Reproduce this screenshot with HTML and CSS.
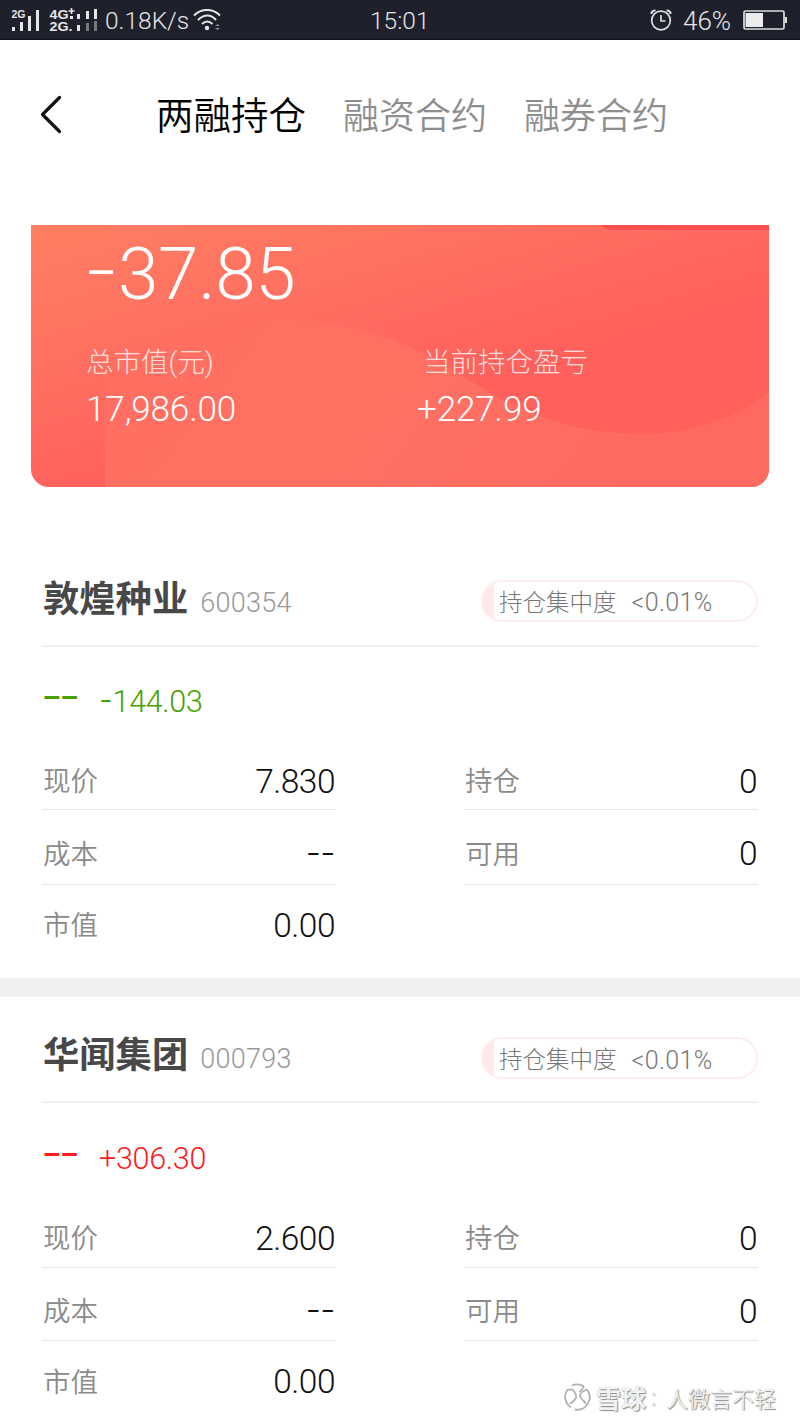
FILE: index.html
```html
<!DOCTYPE html>
<html lang="zh-CN">
<head>
    <meta charset="UTF-8">
    <meta name="viewport" content="width=device-width, initial-scale=1.0">
    <title>两融持仓</title>
    <link rel="stylesheet" href="styles.css">
</head>
<body>
    <div class="status-bar">
        <svg class="signal" width="92" height="40" viewBox="0 0 92 40">
            <g fill="#e6e6e8">
                <rect x="2" y="27" width="3" height="4"/>
                <rect x="10" y="22" width="3" height="9"/>
                <rect x="18" y="16" width="3" height="15"/>
                <rect x="26" y="10" width="3" height="21"/>
                <rect x="67" y="14" width="3" height="5"/>
                <rect x="76" y="11" width="3" height="8"/>
                <rect x="84" y="9" width="3" height="10"/>
                <rect x="60" y="16" width="3" height="3"/>
                <rect x="67" y="25" width="3" height="6"/>
            </g>
            <g fill="#77797f">
                <rect x="76" y="23" width="3" height="8"/>
                <rect x="84" y="21" width="3" height="10"/>
            </g>
            <path d="M61.500 8v6M58.500 11h6" stroke="#e6e6e8" stroke-width="1.600"/>
            <g class="signal-text">
                <text x="1.500" y="18" font-size="10.5">2G</text>
                <text x="39.500" y="18.500" font-size="12.5" textLength="19" lengthAdjust="spacingAndGlyphs">4G</text>
                <text x="39.500" y="31" font-size="12.5" textLength="23" lengthAdjust="spacingAndGlyphs">2G.</text>
            </g>
        </svg>
        <span class="speed">0.18K/s</span>
        <svg class="wifi" width="30" height="40" viewBox="0 0 30 40">
            <g fill="none" stroke="#e6e6e8" stroke-width="2">
                <path d="M1 15.500C8 8 20 8 27 15.500"/>
                <path d="M5 20C11 14 18 14 23 20"/>
                <path d="M9 24C12.500 20.500 16 20.500 19.500 24"/>
            </g>
            <circle cx="14" cy="28" r="2.200" fill="#e6e6e8"/>
            <path d="M22 26l2.500-2 2.500 2zM22 28l2.500 2 2.500-2z" fill="#8b8d92"/>
        </svg>
        <span class="clock">15:01</span>
        <svg class="alarm" width="22" height="40" viewBox="0 0 22 40">
            <g fill="none" stroke="#dcdde0" stroke-width="1.700">
                <circle cx="11" cy="20.500" r="9.300"/>
                <path d="M11 15v6h4.500"/>
                <path d="M1.500 14q0-3.500 4-3.500M20.500 14q0-3.500-4-3.500" stroke-width="2.200"/>
            </g>
        </svg>
        <span class="percent">46%</span>
        <svg class="battery" width="46" height="40" viewBox="0 0 46 40">
            <rect x="1" y="11" width="40" height="18" rx="1.500" fill="none" stroke="#dcdde0" stroke-width="1.700"/>
            <rect x="2.500" y="13" width="17.500" height="14" fill="#ececee"/>
            <rect x="42" y="17" width="2" height="6" fill="#dcdde0"/>
        </svg>
    </div>

    <div class="nav">
        <svg class="back" width="24" height="40" viewBox="0 0 24 40">
            <path d="M20.500 3.500L3.500 20.500L20.500 37.500" fill="none" stroke="#111" stroke-width="3.200" stroke-linecap="round" stroke-linejoin="round"/>
        </svg>
        <span class="tab active">两融持仓</span>
        <span class="tab">融资合约</span>
        <span class="tab">融券合约</span>
    </div>

    <div class="card">
        <svg class="card-bg" width="738" height="262" viewBox="31 224.500 738 262">
            <defs>
                <linearGradient id="base" gradientUnits="userSpaceOnUse" x1="31" y1="224" x2="110" y2="490">
                    <stop offset="0" stop-color="#ff7f62"/>
                    <stop offset="0.500" stop-color="#ff7061"/>
                    <stop offset="1" stop-color="#ff605c"/>
                </linearGradient>
                <linearGradient id="wave" x1="0" y1="0" x2="1" y2="0.200">
                    <stop offset="0" stop-color="#ff6e61"/>
                    <stop offset="0.500" stop-color="#ff7063"/>
                    <stop offset="1" stop-color="#ff6a60"/>
                </linearGradient>
            </defs>
            <rect x="31" y="224" width="738" height="263" fill="url(#base)"/>
            <path d="M105 487V400C105 350 190 318 265 318C400 318 450 373 508 402C556 426 600 433.500 645 433.500C697 433.500 742 413 769 392V487Z" fill="url(#wave)"/>
            <path d="M600 224.500Q606 229.500 614 229.500H769V224.500Z" fill="#ff5050"/>
        </svg>
        <div class="total"><span class="dash">-</span>37.85</div>
        <div class="card-row">
            <div class="card-item">
                <div class="card-label">总市值(元)</div>
                <div class="card-value">17,986.00</div>
            </div>
            <div class="card-item profit">
                <div class="card-label">当前持仓盈亏</div>
                <div class="card-value">+227.99</div>
            </div>
        </div>
    </div>

    <div class="stock">
        <div class="stock-head">
            <span class="name">敦煌种业</span>
            <span class="code">600354</span>
            <div class="pill"><span>持仓集中度</span><span class="ratio">&lt;0.01%</span></div>
        </div>
        <div class="change down">
            <span class="rate">--</span>
            <span class="amount"><span class="dash">-</span>144.03</span>
        </div>
        <div class="grid">
            <div class="cell first"><span>现价</span><b>7.830</b></div>
            <div class="cell first"><span>持仓</span><b>0</b></div>
            <div class="cell middle"><span>成本</span><b class="dash">--</b></div>
            <div class="cell middle"><span>可用</span><b>0</b></div>
            <div class="cell last"><span>市值</span><b>0.00</b></div>
        </div>
    </div>

    <div class="divider"></div>

    <div class="stock second">
        <div class="stock-head">
            <span class="name">华闻集团</span>
            <span class="code">000793</span>
            <div class="pill"><span>持仓集中度</span><span class="ratio">&lt;0.01%</span></div>
        </div>
        <div class="change up">
            <span class="rate">--</span>
            <span class="amount">+306.30</span>
        </div>
        <div class="grid">
            <div class="cell first"><span>现价</span><b>2.600</b></div>
            <div class="cell first"><span>持仓</span><b>0</b></div>
            <div class="cell middle"><span>成本</span><b class="dash">--</b></div>
            <div class="cell middle"><span>可用</span><b>0</b></div>
            <div class="cell last"><span>市值</span><b>0.00</b></div>
        </div>
    </div>

    <div class="watermark">
        <svg width="30" height="30" viewBox="0 0 30 30">
            <g fill="none" stroke="#b0b0b0" stroke-width="1.800">
                <path d="M8 25.500A12.500 12.500 0 0 1 5 7M9 3.500A12.500 12.500 0 0 1 21 4.500M24 7.500A12.500 12.500 0 0 1 12 27.500"/>
                <path d="M5 8c5-2 7 2 8 5s-1 5-6 9M21 4.500c-2 3-3 5-5 5M24 7.500c-5 2-7 4-7 6s3 5 6 8"/>
            </g>
        </svg>
        <strong>雪球</strong><span class="colon">:</span><span>人微言不轻</span>
    </div>
</body>
</html>
```

FILE: styles.css
```css
* {
    margin: 0;
    padding: 0;
    box-sizing: border-box;
}

body {
    width: 800px;
    height: 1422px;
    overflow: hidden;
    position: relative;
    background: #fff;
    font-family: Roboto, "Noto Sans CJK SC", sans-serif;
    font-weight: 350;
    white-space: nowrap;
}

.dash {
    font-family: Inter, sans-serif;
}

/* status bar */
.status-bar {
    height: 40px;
    padding-left: 10px;
    background: #1e212b;
    border-bottom: 1px solid #10121a;
    color: #e4e4e6;
    display: flex;
    align-items: center;
    font-size: 25px;
    line-height: 36px;
}

.status-bar span {
    padding-top: 3px;
}

.signal-text {
    fill: #e6e6e8;
    font-family: "Liberation Sans", sans-serif;
    font-weight: 700;
}

.speed {
    width: 84px;
    margin-left: 3px;
    font-size: 24.5px;
}

.wifi {
    margin-left: 4px;
}

.clock {
    width: 60px;
    margin-left: 147px;
    font-size: 24.5px;
}

.alarm {
    margin-left: 220px;
}

.percent {
    width: 50px;
    margin-left: 11px;
    font-size: 26px;
}

.battery {
    margin-left: 10px;
}

/* top tabs */
.nav {
    height: 184px;
    padding: 0 0 36px 39px;
    display: flex;
    align-items: center;
}

.tab {
    width: 144px;
    margin-right: 37px;
    padding-bottom: 3px;
    font-size: 36px;
    color: #8e8e8e;
}

.tab.active {
    width: 150px;
    margin-left: 93px;
    padding-bottom: 4px;
    font-size: 37.5px;
    color: #000;
}

/* summary card */
.card {
    height: 262px;
    margin: 0.5px 31px 0;
    padding: 0 55px;
    border-radius: 0 0 18px 18px;
    overflow: hidden;
    position: relative;
    color: #fff;
}

.card-bg {
    position: absolute;
    left: 0;
    top: 0;
    z-index: -1;
}

.total {
    height: 96px;
    line-height: 98px;
    font-size: 73px;
    letter-spacing: -0.4px;
}

.total .dash {
    display: inline-block;
    width: 31px;
    margin-left: 1px;
    font-size: 60px;
    line-height: 60px;
    vertical-align: 8px;
    transform: scaleX(1.3);
    transform-origin: 3px 0;
    letter-spacing: -4px;
    text-indent: -2px;
}

.card-row {
    display: flex;
    margin-top: 23px;
}

.card-item {
    flex: none;
    width: 331px;
}

.card-label {
    height: 38px;
    line-height: 38px;
    font-size: 27.5px;
    font-weight: 300;
    color: rgba(255, 255, 255, 0.8);
}

.profit .card-label {
    padding-left: 6px;
}

.card-value {
    height: 56px;
    line-height: 56px;
    font-size: 35px;
    letter-spacing: -0.1px;
}

/* stock block */
.stock {
    padding: 0 42px;
    height: 491.5px;
    padding-top: 69px;
}

.stock-head {
    height: 91px;
    border-bottom: 2px solid #f0f0f0;
    display: flex;
    align-items: baseline;
    padding-top: 17px;
}

.name {
    margin-left: 1px;
    font-size: 36.3px;
    font-weight: 700;
    line-height: 54px;
    color: #484848;
}

.code {
    margin-left: 12px;
    font-size: 27px;
    letter-spacing: 0.3px;
    color: #999;
}

.pill {
    width: 277px;
    height: 42px;
    margin-top: 7px;
    margin-left: auto;
    padding-left: 16px;
    border: 2px solid #ffeded;
    border-radius: 21px;
    background: linear-gradient(to right, #ffe8e8 11px, #fff 11px);
    display: flex;
    align-items: center;
    align-self: flex-start;
    font-size: 23.5px;
    font-weight: 300;
    color: #777;
}

.ratio {
    margin-left: 15px;
    padding-top: 4px;
    font-size: 25px;
    letter-spacing: 0.4px;
}

.change {
    height: 109px;
    display: flex;
    align-items: center;
}

.rate {
    width: 58px;
    margin-left: -1px;
    padding-bottom: 14px;
    font-family: Inter, sans-serif;
    font-size: 48px;
    letter-spacing: -4px;
}

.amount {
    font-size: 30.5px;
    letter-spacing: -0.3px;
}

.amount .dash {
    line-height: 1;
    vertical-align: 2px;
}

.down {
    color: #46a000;
}

.up {
    color: #ff1a20;
}

.grid {
    display: grid;
    grid-template-columns: 294px 294px;
    grid-template-rows: 54px 75px 81px;
    column-gap: 128px;
}

.cell {
    display: flex;
    justify-content: space-between;
    align-items: center;
    border-bottom: 1px solid #e6e6e6;
    color: #8a8a8a;
    font-size: 27.5px;
}

.cell span {
    padding-left: 1px;
    padding-bottom: 4px;
}

.cell b {
    padding-right: 1px;
    font-weight: 350;
    font-size: 33.5px;
    letter-spacing: -0.5px;
    color: #111;
}

.cell.first {
    padding-bottom: 2px;
}

.cell.middle {
    padding-top: 14px;
}

.cell b.dash {
    padding-bottom: 4px;
}

.cell.last {
    border: none;
}

.divider {
    height: 19px;
    background: #f0f0f0;
}

.second {
    padding-top: 15px;
}

.second .pill {
    margin-top: 8px;
}

.second .change {
    height: 111px;
}

.second .grid {
    grid-template-rows: 54px 73px 81px;
}

.second .first {
    padding-bottom: 5px;
}

/* watermark over the last rows */
.watermark {
    position: absolute;
    left: 563px;
    top: 1381px;
    display: flex;
    align-items: center;
    height: 32px;
    font-size: 22px;
    color: #f2f2f2;
    text-shadow: 1px 1px 1px #888, 0 0 1px #bbb;
}

.watermark strong {
    margin-left: 3px;
    font-size: 25px;
    font-weight: 700;
}

.colon {
    width: 20px;
    padding-left: 5px;
}
```
